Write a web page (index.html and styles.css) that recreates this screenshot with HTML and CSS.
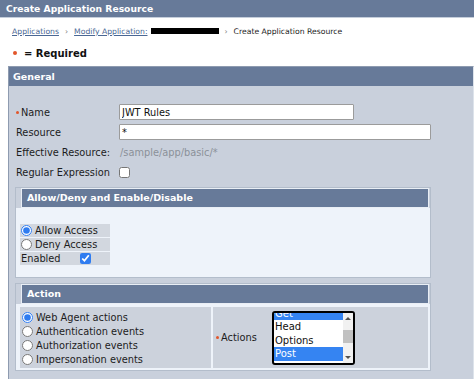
FILE: index.html
```html
<!DOCTYPE html>
<html lang="en">
<head>
    <meta charset="UTF-8">
    <title>Create Application Resource</title>
    <link rel="stylesheet" href="styles.css">
</head>
<body>
    <div class="titlebar">Create Application Resource</div>

    <div class="crumbs">
        <a href="#">Applications</a><span class="sep">›</span><a href="#">Modify Application:</a><span class="redacted"></span><span class="sep">›</span>Create Application Resource
    </div>

    <div class="required"><span class="dot"></span>= Required</div>

    <div class="panel">
        <div class="panel-head">General</div>
        <div class="panel-body">
            <div class="fields">
                <label><span class="dot small"></span>Name</label>
                <input class="txt name" type="text" value="JWT Rules">
                <label>Resource</label>
                <input class="txt res" type="text" value="*">
                <label>Effective Resource:</label>
                <span class="effective">/sample/app/basic/*</span>
                <label>Regular Expression</label>
                <span><input class="box" type="checkbox"></span>
            </div>

            <!-- allow / deny -->
            <div class="section">
                <div class="sec-head"><div class="sec-title">Allow/Deny and Enable/Disable</div></div>
                <div class="sec-body allow">
                    <div class="opts">
                        <div class="opt"><input type="radio" name="access" checked>Allow Access</div>
                        <div class="opt"><input type="radio" name="access">Deny Access</div>
                        <div class="opt"><span class="lbl">Enabled</span><input class="box" type="checkbox" checked></div>
                    </div>
                </div>
            </div>

            <!-- action -->
            <div class="section">
                <div class="sec-head"><div class="sec-title">Action</div></div>
                <div class="sec-body act">
                    <div class="cell events">
                        <div class="ev"><input type="radio" name="ev" checked>Web Agent actions</div>
                        <div class="ev"><input type="radio" name="ev">Authentication events</div>
                        <div class="ev"><input type="radio" name="ev">Authorization events</div>
                        <div class="ev"><input type="radio" name="ev">Impersonation events</div>
                    </div>
                    <div class="cell actions">
                        <span class="act-label"><span class="dot small"></span>Actions</span>
                        <div class="listbox">
                            <div class="list">
                                <div class="items">
                                    <div class="item sel">Get</div>
                                    <div class="item">Head</div>
                                    <div class="item">Options</div>
                                    <div class="item sel">Post</div>
                                    <div class="item">Put</div>
                                </div>
                            </div>
                            <div class="sbar">
                                <span class="arr up"></span>
                                <span class="thumb"></span>
                                <span class="track"></span>
                                <span class="arr down"></span>
                            </div>
                        </div>
                    </div>
                </div>
            </div>
        </div>
    </div>
</body>
</html>
```

FILE: styles.css
```css
body {
    margin: 0;
    font-family: "DejaVu Sans", Verdana, sans-serif;
    font-size: 9.8px;
    color: #1c1c1c;
    background: #fff;
    accent-color: #2f7cf0;
}

.titlebar {
    height: 17px;
    line-height: 17px;
    padding-left: 6px;
    background: #677a99;
    border-bottom: 1px solid #c5cedb;
    color: #fff;
    font-weight: bold;
    font-size: 9.2px;
}

/* breadcrumb */
.crumbs {
    margin-top: 8px;
    padding-left: 12px;
    line-height: 12px;
    font-size: 7.7px;
    white-space: nowrap;
}

.crumbs a {
    color: #4a6794;
}

.crumbs .sep {
    color: #888;
    margin: 0 6px;
}

.redacted {
    display: inline-block;
    width: 68px;
    height: 6px;
    margin-left: 3px;
    background: #000;
    vertical-align: 0;
}

.required {
    margin-top: 9px;
    padding-left: 13px;
    line-height: 14px;
    font-size: 10px;
    font-weight: bold;
    color: #111;
}

.dot {
    display: inline-block;
    width: 4px;
    height: 4px;
    border-radius: 50%;
    background: #e2562b;
    margin-right: 7px;
    vertical-align: 2px;
}

.dot.small {
    width: 3px;
    height: 3px;
    margin-right: 2px;
}

/* general panel */
.panel {
    margin: 5px 0 0 8px;
    border: 1px solid #8e9bb0;
    border-right-color: #dde3eb;
}

.panel-head {
    height: 19px;
    line-height: 19px;
    padding-left: 4px;
    background: #677a99;
    color: #fff;
    font-weight: bold;
    font-size: 9.5px;
}

.panel-body {
    background: #c9d0dc;
    padding: 16px 0 14px 6px;
}

.fields {
    display: grid;
    grid-template-columns: 103px auto;
    grid-auto-rows: 20px;
    align-items: center;
    padding-left: 1px;
}

.fields label {
    white-space: nowrap;
}

.txt {
    box-sizing: border-box;
    height: 16px;
    padding: 0 2px;
    border: 1px solid #9b9b9b;
    border-radius: 1px;
    background: #fff;
    font-family: "DejaVu Sans", Verdana, sans-serif;
    font-size: 9.8px;
    color: #111;
}

.txt.name {
    width: 235px;
}

.txt.res {
    width: 312px;
}

.effective {
    color: #8b9099;
    padding-left: 1px;
}

input.box {
    width: 11px;
    height: 11px;
    margin: 0;
    display: block;
}

input[type="radio"] {
    width: 11px;
    height: 11px;
    margin: 0 3px 0 1px;
}

/* sections */
.section {
    width: 414px;
    margin-top: 5px;
    border: 1px solid #b3bdcb;
    background: #eef3fa;
}

.sec-head {
    padding: 0 1px 0 5px;
    background: #c9d0dc;
}

.sec-title {
    height: 18px;
    line-height: 18px;
    padding-left: 5px;
    border: 1px solid #e9eef5;
    background: #677a99;
    color: #fff;
    font-weight: bold;
    font-size: 9.5px;
}

.sec-body.allow {
    padding: 16px 0 12px 4px;
}

.opts {
    width: 90px;
    display: grid;
    row-gap: 1px;
}

.opt {
    height: 13px;
    display: flex;
    align-items: center;
    background: #d2d7df;
    white-space: nowrap;
}

.opt .lbl {
    width: 59px;
    padding-left: 1px;
}

.sec-body.act {
    display: grid;
    grid-template-columns: 191px 215px;
    gap: 2px;
    padding: 3px 2px 2px 4px;
}

.cell {
    background: #ccd2dc;
}

.events {
    padding: 3px 0 2px 1px;
}

.ev {
    height: 14px;
    display: flex;
    align-items: center;
    white-space: nowrap;
}

.actions {
    display: flex;
    align-items: center;
    padding-left: 3px;
}

.act-label {
    width: 56px;
}

/* multi select list */
.listbox {
    display: flex;
    width: 79px;
    height: 50px;
    border: 2px solid #000;
    border-radius: 3px;
    background: #fff;
    overflow: hidden;
}

.list {
    flex: 1;
    overflow: hidden;
}

.items {
    margin-top: -6px;
}

.item {
    height: 13.5px;
    line-height: 13.5px;
    padding-left: 1px;
    font-size: 10px;
    color: #111;
}

.item.sel {
    background: #3584f2;
    color: #fff;
}

.sbar {
    width: 10px;
    display: flex;
    flex-direction: column;
    align-items: center;
    background: #f1f1f1;
}

.arr {
    width: 0;
    height: 0;
    border-left: 3px solid transparent;
    border-right: 3px solid transparent;
}

.arr.up {
    margin: 4px 0 3px;
    border-bottom: 3px solid #505050;
}

.arr.down {
    margin: 3px 0 4px;
    border-top: 3px solid #505050;
}

.thumb {
    width: 10px;
    height: 13px;
    margin-top: 7px;
    background: #c1c1c1;
}

.track {
    flex: 1;
}
```
